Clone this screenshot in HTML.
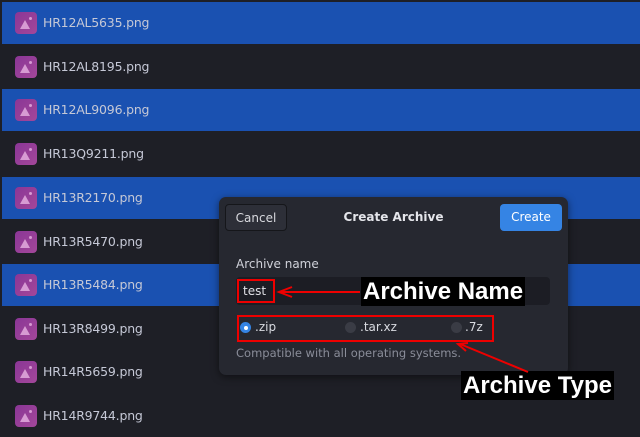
<!DOCTYPE html>
<html><head><style>
body{margin:0;width:640px;height:435px;background:#1e1f26;overflow:hidden;position:relative;font-family:"DejaVu Sans","Liberation Sans",sans-serif;}
.row{position:absolute;left:2px;right:0;height:42px;}
.b{background:#1a51b1;}
.ic{position:absolute;left:13px;top:10px;width:22px;height:22px;border-radius:4px;background:linear-gradient(135deg,#8a3696,#a3479a);}
.ic:before{content:"";position:absolute;left:5px;top:8px;border-left:5px solid transparent;border-right:5px solid transparent;border-bottom:9px solid #d79bd3;}
.ic:after{content:"";position:absolute;left:14px;top:5px;width:3px;height:3px;border-radius:50%;background:#d79bd3;}
.t{position:absolute;left:41px;top:13px;font-size:12.5px;color:#c5c8d6;letter-spacing:-0.2px}
.dlg{position:absolute;left:219px;top:197px;width:349px;height:178px;background:#262830;border-radius:7px;box-shadow:0 2px 8px rgba(0,0,0,.5);}
.btn{position:absolute;top:7px;height:27px;border-radius:4px;font-size:12px;line-height:27px;text-align:center;}
.abs{position:absolute;}
.ann{position:absolute;background:#000;color:#fff;font-family:"Liberation Sans",sans-serif;font-weight:bold;font-size:24px;line-height:29px;padding:0 2px;}
.rad{position:absolute;width:11px;height:11px;border-radius:50%;background:#3a3c45;top:322px;}
</style></head><body>
<div class="row b" style="top:2px"><div class="ic"></div><div class="t">HR12AL5635.png</div></div>
<div class="row" style="top:45.5px"><div class="ic"></div><div class="t">HR12AL8195.png</div></div>
<div class="row b" style="top:89px"><div class="ic"></div><div class="t">HR12AL9096.png</div></div>
<div class="row" style="top:132.5px"><div class="ic"></div><div class="t">HR13Q9211.png</div></div>
<div class="row b" style="top:177px"><div class="ic"></div><div class="t">HR13R2170.png</div></div>
<div class="row" style="top:220.5px"><div class="ic"></div><div class="t">HR13R5470.png</div></div>
<div class="row b" style="top:264px"><div class="ic"></div><div class="t">HR13R5484.png</div></div>
<div class="row" style="top:307.5px"><div class="ic"></div><div class="t">HR13R8499.png</div></div>
<div class="row" style="top:351px"><div class="ic"></div><div class="t">HR14R5659.png</div></div>
<div class="row" style="top:394.5px"><div class="ic"></div><div class="t">HR14R9744.png</div></div>
<div class="dlg">
<div class="btn" style="left:6px;width:62px;background:#2d2f38;border:1px solid #15161a;color:#d8d9de;box-sizing:border-box">Cancel</div>
<div class="abs" style="left:0;width:349px;top:13px;text-align:center;font-size:12px;font-weight:bold;color:#e4e5ea">Create Archive</div>
<div class="btn" style="left:281px;width:62px;background:#3584e4;color:#fff">Create</div>
<div class="abs" style="left:17px;top:60px;font-size:12px;color:#d0d2da">Archive name</div>
<div class="abs" style="left:17px;top:80px;width:314px;height:28px;background:#1c1d24;border-radius:4px"></div>
<div class="abs" style="left:24px;top:87px;font-size:12px;color:#e0e0e6">test</div>
<div class="abs" style="left:17px;top:149px;font-size:11.5px;color:#8a8d99">Compatible with all operating systems.</div>
<div class="abs" style="left:36px;top:123px;font-size:12px;color:#d8dae0">.zip</div>
<div class="abs" style="left:141px;top:123px;font-size:12px;color:#d8dae0">.tar.xz</div>
<div class="abs" style="left:246px;top:123px;font-size:12px;color:#d8dae0">.7z</div>
</div>
<div class="rad" style="left:240px;background:#3584e4"><div style="position:absolute;left:3.5px;top:3.5px;width:4px;height:4px;border-radius:50%;background:#fff"></div></div>
<div class="rad" style="left:345px"></div>
<div class="rad" style="left:451px"></div>
<div class="abs" style="left:237px;top:279px;width:34px;height:20px;border:2px solid #e00"></div>
<div class="abs" style="left:237px;top:315px;width:253px;height:23px;border:2px solid #e00"></div>
<div class="ann" style="left:361px;top:277px">Archive Name</div>
<div class="ann" style="left:461px;top:371px">Archive Type</div>
<svg class="abs" style="left:0;top:0" width="640" height="435">
<g stroke="#e00" stroke-width="2" fill="none">
<line x1="360" y1="292" x2="280" y2="292"/><polyline points="292,287 279,292 292,297"/>
<line x1="528" y1="372" x2="460" y2="344"/><polyline points="468,343 458,344 466,351"/>
</g></svg>
</body></html>
